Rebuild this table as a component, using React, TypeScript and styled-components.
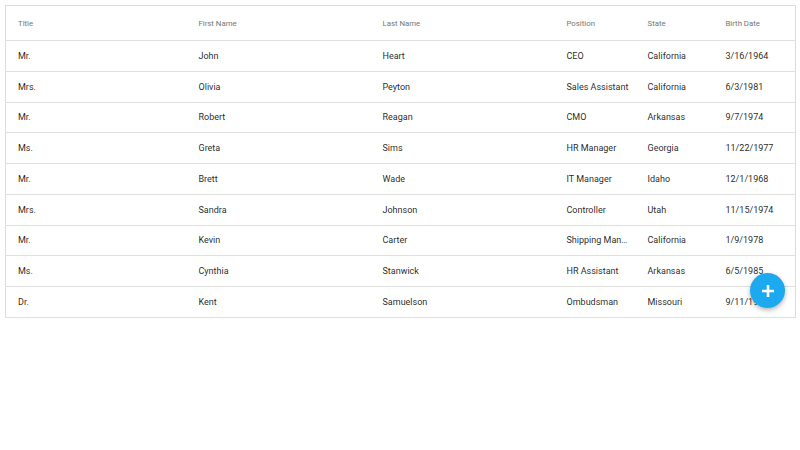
import React from "react";
import styled, { createGlobalStyle } from "styled-components";

const Global = createGlobalStyle`
  html, body { margin: 0; padding: 0; background: #fff; }
  body { font-family: Roboto, "Liberation Sans", Arial, sans-serif; }
`;

const Page = styled.div`
  padding: 5px;
  position: relative;
  width: 790px;
`;

const Table = styled.table`
  width: 790px;
  border-collapse: collapse;
  table-layout: fixed;
  border: 1px solid #dcdcdc;
`;

const HeadCell = styled.th`
  height: 35px;
  padding: 0 7px 0 12px;
  text-align: left;
  font-weight: 400;
  font-size: 7.8px;
  color: #757575;
  border-bottom: 1px solid #e0e0e0;
  white-space: nowrap;
  overflow: hidden;
  text-overflow: ellipsis;
  box-sizing: border-box;
`;

const Row = styled.tr`
  height: 30.78px;
  border-bottom: 1px solid #e0e0e0;
`;

const Cell = styled.td`
  padding: 0 7px 0 12px;
  font-size: 9px;
  color: rgba(0, 0, 0, 0.87);
  white-space: nowrap;
  overflow: hidden;
  text-overflow: ellipsis;
`;

const Fab = styled.button`
  position: absolute;
  left: 750px;
  top: 273px;
  width: 35px;
  height: 35px;
  border-radius: 50%;
  border: none;
  padding: 0;
  background: #1da9ef;
  box-shadow: 0 2px 5px rgba(0, 0, 0, 0.3);
  display: flex;
  align-items: center;
  justify-content: center;
  cursor: pointer;
`;

const cols = [
  { key: "title", label: "Title", width: 181 },
  { key: "first", label: "First Name", width: 184 },
  { key: "last", label: "Last Name", width: 184 },
  { key: "position", label: "Position", width: 81 },
  { key: "state", label: "State", width: 78 },
  { key: "birth", label: "Birth Date", width: 82 },
];

const rows = [
  ["Mr.", "John", "Heart", "CEO", "California", "3/16/1964"],
  ["Mrs.", "Olivia", "Peyton", "Sales Assistant", "California", "6/3/1981"],
  ["Mr.", "Robert", "Reagan", "CMO", "Arkansas", "9/7/1974"],
  ["Ms.", "Greta", "Sims", "HR Manager", "Georgia", "11/22/1977"],
  ["Mr.", "Brett", "Wade", "IT Manager", "Idaho", "12/1/1968"],
  ["Mrs.", "Sandra", "Johnson", "Controller", "Utah", "11/15/1974"],
  ["Mr.", "Kevin", "Carter", "Shipping Manager", "California", "1/9/1978"],
  ["Ms.", "Cynthia", "Stanwick", "HR Assistant", "Arkansas", "6/5/1985"],
  ["Dr.", "Kent", "Samuelson", "Ombudsman", "Missouri", "9/11/1972"],
];

export default function App() {
  return (
    <>
      <Global />
      <Page>
        <Table>
          <colgroup>
            {cols.map((c) => (
              <col key={c.key} style={{ width: c.width }} />
            ))}
          </colgroup>
          <thead>
            <tr>
              {cols.map((c) => (
                <HeadCell key={c.key}>{c.label}</HeadCell>
              ))}
            </tr>
          </thead>
          <tbody>
            {rows.map((r, i) => (
              <Row key={i}>
                {r.map((v, j) => (
                  <Cell key={j}>{v}</Cell>
                ))}
              </Row>
            ))}
          </tbody>
        </Table>
        <Fab aria-label="Add">
          <svg width="14" height="14" viewBox="0 0 14 14">
            <path d="M7 1v12M1 7h12" stroke="#fff" strokeWidth="2.6" strokeLinecap="butt" />
          </svg>
        </Fab>
      </Page>
    </>
  );
}
